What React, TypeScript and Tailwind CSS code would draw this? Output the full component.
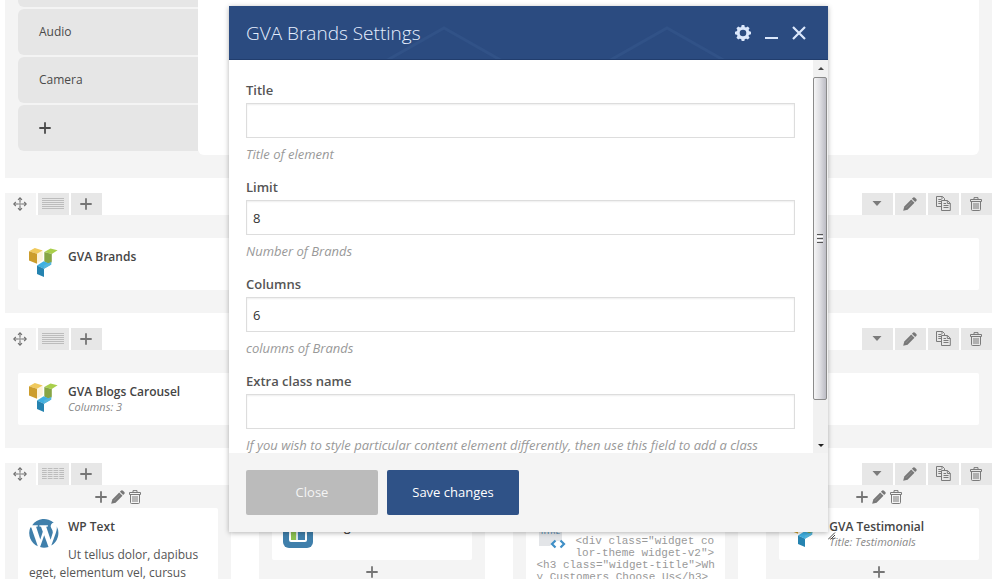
import React from "react";

type IconProps = { className?: string };

function PlusIcon({ className = "size-3" }: IconProps) {
  return (
    <svg viewBox="0 0 12 12" className={className} stroke="currentColor" strokeWidth="1.8" aria-hidden="true">
      <path d="M6 0.3V11.7M0.3 6H11.7" />
    </svg>
  );
}

function MoveIcon() {
  return (
    <svg viewBox="0 0 14 14" className="size-3.5" fill="none" stroke="#6f6f6f" strokeWidth="1.1" aria-hidden="true">
      <path d="M7 1V5.6M7 8.4V13M1 7H5.6M8.4 7H13" />
      <path d="M5 2.8L7 0.8L9 2.8M5 11.2L7 13.2L9 11.2M2.8 5L0.8 7L2.8 9M11.2 5L13.2 7L11.2 9" />
      <circle cx="7" cy="7" r="1" strokeWidth="0.7" />
    </svg>
  );
}

function LayoutIcon({ split }: { split: boolean }) {
  return (
    <svg viewBox="0 0 22 12" className="h-3 w-[22px]" fill="none" stroke="#bcbcbc" strokeWidth="1" aria-hidden="true">
      <path
        d="M0 0.5H22M0 2.5H22M0 4.5H22M0 6.5H22M0 8.5H22M0 10.5H22"
        strokeDasharray={split ? "4.75 1" : undefined}
      />
    </svg>
  );
}

function PencilIcon() {
  return (
    <svg viewBox="0 0 14 14" className="size-3.5" fill="#777" aria-hidden="true">
      <path d="M0.2 13.8L1.3 9.4L8.2 2.5L11.5 5.8L4.6 12.7Z" />
      <path d="M8.9 1.8L10.2 0.6Q11.1 -0.1 12 0.7L13.3 2Q14.1 2.9 13.4 3.8L12.2 5.1Z" />
      <path d="M2.8 10.9L9.4 4.3" stroke="#a5a5a5" strokeWidth="0.5" />
    </svg>
  );
}

function CopyIcon() {
  return (
    <svg viewBox="0 0 15 15" className="size-[15px]" fill="none" stroke="#7b7b7b" strokeWidth="1" aria-hidden="true">
      <path d="M5 10.5H0.5V0.5H6.5L8.5 2.5V4M6 0.5V3M2.3 3.5H5.5M2.3 5.5H5.5M2.3 7.5H5" />
      <path d="M5.5 4.5H11.5L14.3 7.2V14.5H5.5ZM11.3 4.7V7.5H14.2M7.5 7.5H10M7.5 9.5H12.5M7.5 11.5H12.5" />
    </svg>
  );
}

function TrashIcon() {
  return (
    <svg viewBox="0 0 12 14" className="h-3.5 w-3" fill="none" stroke="#7b7b7b" strokeWidth="1" aria-hidden="true">
      <path d="M4 2.3V0.6H8V2.3M0.5 2.5H11.5V4.5H0.5ZM1.5 4.5V12.5Q1.5 13.5 2.5 13.5H9.5Q10.5 13.5 10.5 12.5V4.5M4 6V12M6 6V12M8 6V12" />
    </svg>
  );
}

function CaretIcon() {
  return (
    <svg viewBox="0 0 10 5" className="h-[5px] w-2.5" fill="#7b7b7b" aria-hidden="true">
      <path d="M0.5 0H9.5L5 5Z" />
    </svg>
  );
}

function GearIcon() {
  return (
    <svg viewBox="-8 -8 16 16" className="size-4" fill="#dbe7fb" aria-hidden="true">
      <circle r="4.8" fill="none" stroke="#dbe7fb" strokeWidth="3" />
      {[0, 45, 90, 135].map((angle) => (
        <g key={angle} transform={`rotate(${angle})`}>
          <path d="M-1.9 -5.5L-1.3 -8H1.3L1.9 -5.5Z" />
          <path d="M-1.9 5.5L-1.3 8H1.3L1.9 5.5Z" />
        </g>
      ))}
    </svg>
  );
}

function CubesIcon() {
  return (
    <svg viewBox="0 0 29 29" className="size-[29px]" aria-hidden="true">
      <path d="M8 5.8L13.7 2.4V12L8 15.8Z" fill="#fdf3da" />
      <path d="M0 3.2L5.8 0L13.7 2.4L8 5.8Z" fill="#f0c95c" />
      <path d="M0 3.2L8 5.8V15.8L0 12.5Z" fill="#cc9d2c" />
      <path d="M15.3 4L21.5 0.5L28.6 2.3L22.8 6Z" fill="#a9cf4b" />
      <path d="M15.3 4L22.8 6V13.5L21 17L15.3 13.5Z" fill="#86a545" />
      <path d="M8 17.4L14.7 13.2L22.3 16.4L15 20.7Z" fill="#3fb0e2" />
      <path d="M8 17.4L15 20.7V29L8 26Z" fill="#2583b0" />
      <path d="M22.3 13.8V16.4L15 20.7L14.8 17.5Z" fill="#56b6dc" />
    </svg>
  );
}

function WordPressIcon() {
  return (
    <svg viewBox="0 0 30 30" className="size-[30px]" fill="#3f7fab" aria-hidden="true">
      <path d="M3.2 7.2A14.4 14.4 0 0 1 24.8 4.7C22.4 4.9 21.4 7 21.8 9C22.1 10.5 24.2 12.2 23.7 15L21.6 21.7L17.2 8.8L18.9 8.6V7.2H10.4V8.6L12 8.8L13.8 13.8L11.3 21.4L7.1 8.8L8.8 8.6V7.2Z" />
      <path d="M1.3 9.6A14.6 14.6 0 0 0 8.8 28.3L2.3 9.6Z" />
      <path d="M15.2 17.3L11.1 29.1A14.6 14.6 0 0 0 19.5 28.9Z" />
      <path d="M27.7 8.3Q28.2 11.3 26.8 15L22.3 27.6A14.6 14.6 0 0 0 27.7 8.3Z" />
    </svg>
  );
}

function SidebarIcon() {
  return (
    <svg viewBox="0 0 30 30" className="size-[30px]" aria-hidden="true">
      <rect width="30" height="30" rx="6" fill="#3f7fab" />
      <rect x="7" y="7" width="16" height="16" rx="1" fill="#3f7fab" stroke="#fff" strokeWidth="2" />
      <rect x="8" y="8" width="5" height="14" fill="#8cc152" />
      <path d="M14 7V23" stroke="#fff" strokeWidth="1.6" />
    </svg>
  );
}

function HtmlIcon() {
  return (
    <svg viewBox="0 0 30 33" className="h-[33px] w-[30px]" aria-hidden="true">
      <path d="M2 2H25V23H17L13 28H2Z" fill="#e3e5e8" />
      <text x="4" y="16" fontSize="8" fontFamily="Liberation Mono, monospace" fill="#3f7fab">HTML</text>
      <path d="M18.5 22.5L15 26L18.5 29.5M23.5 22.5L27 26L23.5 29.5" fill="none" stroke="#3f8fc6" strokeWidth="2.2" />
    </svg>
  );
}

const toolButton = "flex h-[22px] w-[31px] items-center justify-center bg-[#e7e7e7] pr-px pb-px text-[#757575]";

function Toolbar({ split = false }: { split?: boolean }) {
  return (
    <div className="flex justify-between">
      <div className="flex gap-0.5">
        <button aria-label="Move row" className="flex h-[22px] w-[31px] items-center justify-center bg-[#f4f4f4] pr-px pb-px">
          <MoveIcon />
        </button>
        <button aria-label="Row layout" className={toolButton}>
          <LayoutIcon split={split} />
        </button>
        <button aria-label="Add column" className={toolButton}>
          <PlusIcon />
        </button>
      </div>
      <div className="flex gap-0.5">
        <button aria-label="Toggle row" className={toolButton}><CaretIcon /></button>
        <button aria-label="Edit row" className={toolButton}><PencilIcon /></button>
        <button aria-label="Clone row" className={toolButton}><CopyIcon /></button>
        <button aria-label="Delete row" className={toolButton}><TrashIcon /></button>
      </div>
    </div>
  );
}

type CardProps = { icon: React.ReactNode; title: string; note?: string; children?: React.ReactNode };

function Card({ icon, title, note, children }: CardProps) {
  return (
    <div className="min-h-[52px] rounded-xs bg-white pt-2.5 pr-2 pl-[11px]">
      <div className="float-left h-[34px] w-[39px]">{icon}</div>
      <h4 className="text-xs leading-[17px] font-semibold text-[#444]">{title}</h4>
      {note && <p className="text-[11px] leading-[14px] text-[#888] italic">{note}</p>}
      {children}
    </div>
  );
}

function Column({ controls = false, children }: { controls?: boolean; children: React.ReactNode }) {
  return (
    <div className="bg-[#f4f4f4] px-[13px] text-[#757575]">
      <div className="flex h-[23px] items-center justify-center gap-1">
        {controls && (
          <>
            <button aria-label="Add element"><PlusIcon /></button>
            <button aria-label="Edit column"><PencilIcon /></button>
            <button aria-label="Delete column"><TrashIcon /></button>
          </>
        )}
      </div>
      {children}
      <div className="flex h-[23px] items-center justify-center">
        <button aria-label="Append element"><PlusIcon /></button>
      </div>
    </div>
  );
}

function Row({ children }: { children: React.ReactNode }) {
  return (
    <section>
      <Toolbar />
      <div className="bg-[#f4f4f4] px-[13px] py-[23px]">{children}</div>
    </section>
  );
}

function Field({ id, label, value = "", hint }: { id: string; label: string; value?: string; hint: string }) {
  return (
    <div className="mb-[13px]">
      <label htmlFor={id} className="block text-[13px] leading-5 font-semibold text-[#555]">{label}</label>
      <input
        id={id}
        defaultValue={value}
        className="mt-[3px] block h-[35px] w-full border border-[#ddd] bg-white px-1.5 text-[13px] text-[#333] shadow-[inset_0_1px_2px_rgba(0,0,0,0.07)] outline-none"
      />
      <p className="mt-1.5 text-[13px] leading-5 text-[#999] italic">{hint}</p>
    </div>
  );
}

function ScrollBar() {
  return (
    <div className="flex w-[15px] flex-col bg-[#f1f1f1]" aria-hidden="true">
      <div className="flex h-[17px] items-center justify-center">
        <svg viewBox="0 0 6 3" className="h-[3px] w-1.5"><path d="M0 3L3 0L6 3Z" fill="#444" /></svg>
      </div>
      <div className="flex w-3.5 flex-1 flex-col items-center justify-center gap-px rounded-xs border border-[#8b8b8b] bg-linear-to-r from-[#f5f5f6] via-[#dedee2] to-[#bcbcc4]">
        <span className="h-px w-1.5 bg-[#555]" />
        <span className="h-px w-1.5 bg-white" />
        <span className="h-px w-1.5 bg-[#555]" />
        <span className="h-px w-1.5 bg-white" />
        <span className="h-px w-1.5 bg-[#555]" />
      </div>
      <div className="flex h-[53px] items-end justify-center pb-1.5">
        <svg viewBox="0 0 6 3" className="h-[3px] w-1.5"><path d="M0 0H6L3 3Z" fill="#222" /></svg>
      </div>
    </div>
  );
}

function SettingsDialog() {
  return (
    <div
      role="dialog"
      aria-labelledby="dialog-title"
      className="absolute top-1.5 right-[172px] left-[229px] flex h-[526px] flex-col bg-white shadow-[0_1px_5px_rgba(0,0,0,0.3)]"
    >
      <header className="relative flex h-[54px] shrink-0 items-center justify-between overflow-hidden border-b border-[#213d6d] bg-[#2b4b80] pr-[22px] pl-[17px]">
        <svg className="absolute top-0 left-0 h-[54px] w-full" fill="none" stroke="#315287" strokeWidth="3" aria-hidden="true">
          <path d="M155 56L215 22L275 56M378 56L438 22L498 56" />
        </svg>
        <h2 id="dialog-title" className="relative text-[19px] leading-6 font-light text-[#e6efff]">GVA Brands Settings</h2>
        <div className="relative flex items-center gap-3.5">
          <button aria-label="Settings"><GearIcon /></button>
          <button aria-label="Minimize">
            <svg viewBox="0 0 13 14" className="h-3.5 w-[13px]" aria-hidden="true"><path d="M0 12H13" stroke="#dbe7fb" strokeWidth="2" /></svg>
          </button>
          <button aria-label="Close dialog">
            <svg viewBox="0 0 14 14" className="size-3.5" stroke="#dbe7fb" strokeWidth="2.2" aria-hidden="true"><path d="M1 1L13 13M13 1L1 13" /></svg>
          </button>
        </div>
      </header>
      <div className="flex min-h-0 flex-1">
        <form className="min-w-0 flex-1 overflow-hidden pt-5 pr-[18px] pl-[17px]">
          <Field id="title" label="Title" hint="Title of element" />
          <Field id="limit" label="Limit" value="8" hint="Number of Brands" />
          <Field id="columns" label="Columns" value="6" hint="columns of Brands" />
          <Field id="extra" label="Extra class name" hint="If you wish to style particular content element differently, then use this field to add a class" />
        </form>
        <ScrollBar />
      </div>
      <footer className="flex shrink-0 gap-[9px] bg-[#f4f4f4] p-[17px]">
        <button className="h-[45px] w-[132px] rounded-xs bg-[#bbb] text-[13px] text-[#f4f4f4]">Close</button>
        <button className="h-[45px] w-[132px] rounded-xs bg-[#2f5287] text-[13px] text-white">Save changes</button>
      </footer>
      <svg viewBox="0 0 8 8" className="absolute -right-2 -bottom-2 size-2" stroke="#444" strokeWidth="1" aria-hidden="true">
        <path d="M0 7.5L7 0.5M2.5 7.5L7 3M5 7.5L7 5.5" />
      </svg>
    </div>
  );
}

const tab = "flex h-[46px] items-center rounded-l-md bg-[#e6e6e6] pl-[21px] text-left text-xs text-[#4a4a4a]";

export default function App() {
  return (
    <div className="relative h-screen overflow-hidden bg-white font-['Open_Sans',sans-serif]">
      <main className="flex flex-col gap-[15px] pr-2 pl-[5px]">
        <section className="flex h-[178px] bg-[#f4f4f4] px-[13px]">
          <nav className="flex w-[180px] flex-col gap-0.5">
            <div className="h-[7px] rounded-bl-md bg-[#e6e6e6]" />
            <button className={tab}>Audio</button>
            <button className={tab}>Camera</button>
            <button aria-label="Add tab" className={tab}><PlusIcon /></button>
          </nav>
          <div className="h-[155px] flex-1 rounded-b-md bg-white" />
        </section>

        <Row>
          <Card icon={<CubesIcon />} title="GVA Brands" />
        </Row>
        <Row>
          <Card icon={<CubesIcon />} title="GVA Blogs Carousel" note="Columns: 3" />
        </Row>

        <section>
          <Toolbar split />
          <div className="grid grid-cols-4 items-start gap-7">
            <Column controls>
              <Card icon={<WordPressIcon />} title="WP Text">
                <p className="mt-[11px] text-xs leading-[18px] text-[#555]">
                  Ut tellus dolor, dapibus eget, elementum vel, cursus
                </p>
              </Card>
            </Column>
            <Column>
              <Card icon={<SidebarIcon />} title="Widgetised Sidebar" />
            </Column>
            <Column>
              <Card icon={<HtmlIcon />} title="Raw HTML">
                <code className="block font-['Liberation_Mono',monospace] text-[11px] leading-3 break-all text-[#999]">
                  {'<div class="widget color-theme widget-v2"><h3 class="widget-title">Why Customers Choose Us</h3>'}
                </code>
              </Card>
            </Column>
            <Column controls>
              <Card icon={<CubesIcon />} title="GVA Testimonial" note="Title: Testimonials" />
            </Column>
          </div>
        </section>
      </main>
      <SettingsDialog />
    </div>
  );
}
